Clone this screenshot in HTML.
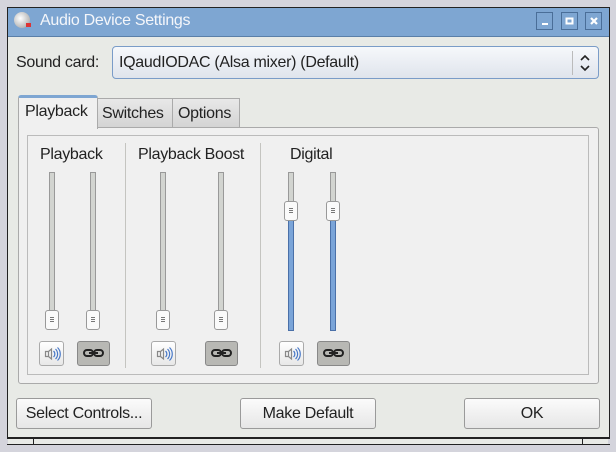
<!DOCTYPE html>
<html><head><style>
*{box-sizing:border-box;margin:0;padding:0}
body{width:616px;height:452px;background:#d4d4dc;position:relative;overflow:hidden;font-family:"Liberation Sans",sans-serif;font-size:15px;color:#222}
.a{position:absolute}
.win{left:7px;top:7px;width:603px;height:432px;background:#e8eae6;border:1px solid #222;border-bottom:2px solid #222}
.title{left:8px;top:8px;width:601px;height:29px;background:#7ea6d2;border-bottom:1px solid #5a7fa8}
.tb{top:12px;width:17px;height:18px;border:1px solid #4a6e98;background:#7ea6d2}
.btn{border:1px solid #9a9a9a;border-radius:3px;background:linear-gradient(#fbfbfb,#e6e6e6);text-align:center;line-height:29px}
.trough{width:6px;border:1px solid #999;background:#d2d4d0}
.blue{width:6px;border:1px solid #4a70a8;background:#7aa4d8}
.thumb{width:14px;height:20px;border:1px solid #999;border-radius:3px;background:#fafafa}
.thumb:after{content:"";position:absolute;left:4px;top:6px;width:4px;height:5px;background:linear-gradient(#777 0,#777 1px,transparent 1px,transparent 2px,#777 2px,#777 3px,transparent 3px,transparent 4px,#777 4px,#777 5px)}
.ib{width:25px;height:25px;border:1px solid #aaa;border-radius:3px;background:linear-gradient(#fff,#e8e8e8)}
.lb{width:33px;height:25px;border:1px solid #888;border-radius:3px;background:#b8b8b4}
.sep{width:1px;background:#c4c4c0}
.lbl{font-size:16px;letter-spacing:-0.3px}
</style></head><body>
<div class="a win"></div>
<div class="a title"></div>
<div class="a" style="left:14px;top:12px;width:16px;height:16px;border-radius:50%;background:radial-gradient(circle at 40% 40%,#fff,#999)"></div>
<div class="a" style="left:26px;top:23px;width:5px;height:4px;background:#d33"></div>
<div class="a" style="left:40px;top:12px;font-size:16px;color:#f4f6fa;letter-spacing:-0.3px">Audio Device Settings</div>
<div class="a tb" style="left:536px"></div>
<div class="a tb" style="left:561px"></div>
<div class="a tb" style="left:585px"></div>
<svg class="a" style="left:0;top:0" width="616" height="40">
<rect x="542" y="23" width="6" height="2" fill="#fff"/>
<rect x="566.5" y="18.5" width="6" height="5" fill="none" stroke="#fff" stroke-width="2"/>
<path d="M591 18l6 6M597 18l-6 6" stroke="#fff" stroke-width="2.2"/>
</svg>

<div class="a lbl" style="left:16px;top:54px">Sound card:</div>
<div class="a" style="left:112px;top:46px;width:487px;height:33px;border:1px solid #7a9cc8;border-radius:4px;background:linear-gradient(#f6f8fb,#dfe4ec)"></div>
<div class="a lbl" style="left:119px;top:54px">IQaudIODAC (Alsa mixer) (Default)</div>
<div class="a" style="left:572px;top:51px;width:1px;height:24px;background:#bbb"></div>
<svg class="a" style="left:578px;top:52px" width="14" height="22"><path d="M3 8l4-4 4 4M3 14l4 4 4-4" fill="none" stroke="#222" stroke-width="1.6"/></svg>

<div class="a" style="left:18px;top:127px;width:581px;height:257px;border:1px solid #aaa;border-radius:3px;background:#f0f0f0"></div>
<div class="a" style="left:97px;top:98px;width:76px;height:30px;border:1px solid #aaa;background:linear-gradient(#e8e8e8,#d4d4d4)"></div>
<div class="a lbl" style="left:102px;top:105px">Switches</div>
<div class="a" style="left:172px;top:98px;width:68px;height:30px;border:1px solid #aaa;background:linear-gradient(#e8e8e8,#d4d4d4)"></div>
<div class="a lbl" style="left:178px;top:105px">Options</div>
<div class="a" style="left:18px;top:95px;width:80px;height:34px;border:1px solid #aaa;border-top:3px solid #7ea6d2;border-bottom:none;border-radius:3px 3px 0 0;background:#f0f0f0"></div>
<div class="a lbl" style="left:25px;top:103px">Playback</div>

<div class="a" style="left:27px;top:135px;width:562px;height:240px;border:1px solid #bbb"></div>
<div class="a sep" style="left:125px;top:143px;height:225px"></div>
<div class="a sep" style="left:260px;top:143px;height:225px"></div>
<div class="a lbl" style="left:40px;top:146px">Playback</div>
<div class="a lbl" style="left:138px;top:146px">Playback Boost</div>
<div class="a lbl" style="left:290px;top:146px">Digital</div>

<div class="a trough" style="left:49px;top:172px;height:140px"></div>
<div class="a trough" style="left:90px;top:172px;height:140px"></div>
<div class="a trough" style="left:160px;top:172px;height:140px"></div>
<div class="a trough" style="left:218px;top:172px;height:140px"></div>
<div class="a trough" style="left:288px;top:172px;height:32px"></div>
<div class="a blue" style="left:288px;top:210px;height:121px"></div>
<div class="a trough" style="left:330px;top:172px;height:32px"></div>
<div class="a blue" style="left:330px;top:210px;height:121px"></div>
<div class="a thumb" style="left:45px;top:310px"></div>
<div class="a thumb" style="left:86px;top:310px"></div>
<div class="a thumb" style="left:156px;top:310px"></div>
<div class="a thumb" style="left:214px;top:310px"></div>
<div class="a thumb" style="left:284px;top:201px"></div>
<div class="a thumb" style="left:326px;top:201px"></div>

<div class="a ib" style="left:39px;top:341px"></div>
<div class="a ib" style="left:151px;top:341px"></div>
<div class="a ib" style="left:279px;top:341px"></div>
<svg class="a" style="left:0;top:0" width="616" height="452">
<g fill="none" stroke-width="1.2">
<g id="sp"><path d="M45.5 351.5h3v5h-3zM48.5 351.5l3-2.5v10l-3-2.5" stroke="#888"/><path d="M53.5 351a4 4 0 0 1 0 6M55.5 349a7 7 0 0 1 0 10M57.5 347.5a9 9 0 0 1 0 13" stroke="#4a7ac8"/></g>
<use href="#sp" x="112"/><use href="#sp" x="240"/>
</g>
</svg>
<div class="a lb" style="left:77px;top:341px"></div>
<div class="a lb" style="left:205px;top:341px"></div>
<div class="a lb" style="left:317px;top:341px"></div>
<svg class="a" style="left:0;top:0" width="616" height="452"><g fill="none" stroke="#222" stroke-width="2">
<g id="lk"><rect x="84" y="350" width="9" height="6" rx="3"/><rect x="94" y="350" width="9" height="6" rx="3"/><path d="M89 353h9"/></g>
<use href="#lk" x="128"/><use href="#lk" x="240"/></g></svg>

<div class="a btn lbl" style="left:16px;top:398px;width:136px;height:31px">Select Controls...</div>
<div class="a btn lbl" style="left:240px;top:398px;width:136px;height:31px">Make Default</div>
<div class="a btn lbl" style="left:464px;top:398px;width:136px;height:31px">OK</div>
<div class="a" style="left:8px;top:439px;width:600px;height:5px;background:#e8eae6"></div>
<div class="a" style="left:7px;top:444px;width:603px;height:1px;background:#222"></div>
<div class="a" style="left:33px;top:439px;width:1px;height:6px;background:#222"></div>
<div class="a" style="left:582px;top:439px;width:1px;height:6px;background:#222"></div>
</body></html>
